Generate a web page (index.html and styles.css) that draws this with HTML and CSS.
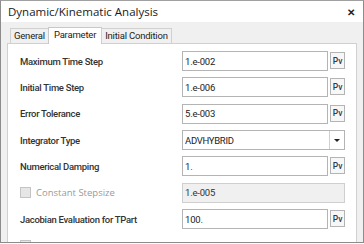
FILE: index.html
```html
<!DOCTYPE html>
<html>
<head>
<meta charset="utf-8" />
<title>Dynamic/Kinematic Analysis</title>
<link rel="stylesheet" href="styles.css">
</head>
<body>
<div class="window">
  <div class="titlebar">
    <span class="title">Dynamic/Kinematic Analysis</span>
    <span class="close">&#x2715;</span>
  </div>
  <div class="client">
    <div class="tabs">
      <div class="tab">General</div>
      <div class="tab active">Parameter</div>
      <div class="tab">Initial Condition</div>
    </div>
    <div class="panel">
      <div class="row">
        <label>Maximum Time Step</label>
        <div class="field"><input type="text" value="1.e-002" /><button class="pv">Pv</button></div>
      </div>
      <div class="row">
        <label>Initial Time Step</label>
        <div class="field"><input type="text" value="1.e-006" /><button class="pv">Pv</button></div>
      </div>
      <div class="row">
        <label>Error Tolerance</label>
        <div class="field"><input type="text" value="5.e-003" /><button class="pv">Pv</button></div>
      </div>
      <div class="row">
        <label>Integrator Type</label>
        <div class="field"><div class="combo"><span>ADVHYBRID</span><span class="arrow"></span></div></div>
      </div>
      <div class="row">
        <label>Numerical Damping</label>
        <div class="field"><input type="text" value="1." /><button class="pv">Pv</button></div>
      </div>
      <div class="row">
        <label class="disabled"><span class="check"></span>Constant Stepsize</label>
        <div class="field"><input type="text" class="off" value="1.e-005" disabled /></div>
      </div>
      <div class="row">
        <label>Jacobian Evaluation for TPart</label>
        <div class="field"><input type="text" value="100." /><button class="pv">Pv</button></div>
      </div>
      <div class="row">
        <label class="disabled"><span class="check"></span></label>
      </div>
    </div>
  </div>
</div>
</body>
</html>
```
FILE: styles.css
```css
html, body {
  margin: 0; padding: 0;
  background: white;
  font-family: "Open Sans", "Liberation Sans", Arial, sans-serif;
  color: #222;
}
.window {
  width: 364px;
  height: 243px;
  box-sizing: border-box;
  border: 1px solid #8c8c8c;
  border-top-color: #a0a0a0;
  overflow: hidden;
  display: flex;
  flex-direction: column;
}
.titlebar {
  height: 21px;
  flex-shrink: 0;
  background: white;
  display: flex;
  align-items: center;
  justify-content: space-between;
  padding: 0 8px 0 7px;
  font-size: 11.5px;
  color: #1a1a1a;
}
.close {
  font-size: 10px;
  font-weight: 700;
  color: #222;
}
.client {
  flex: 1;
  background: #f0f0f0;
  padding: 5px 6px 0 6px;
  display: flex;
  flex-direction: column;
}
.tabs {
  display: flex;
  align-items: flex-end;
  padding-left: 3px;
  height: 16px;
  position: relative;
  z-index: 1;
}
.tab {
  height: 14px;
  padding: 0 3px;
  border: 1px solid #d0d0d0;
  border-bottom: none;
  background: #f0f0f0;
  font-family: Roboto, "Liberation Sans", sans-serif;
  font-size: 9.5px;
  letter-spacing: -0.2px;
  line-height: 14px;
  color: #222;
  margin-right: -1px;
}
.tab.active {
  height: 16px;
  background: white;
  padding: 0 5px;
  line-height: 14px;
  margin-bottom: -1px;
  border-color: #c8c8c8;
}
.panel {
  flex: 1;
  background: white;
  border: 1px solid #d0d0d0;
  border-bottom: none;
  padding: 4px 11px 0 12px;
  display: flex;
  flex-direction: column;
}
.row {
  display: flex;
  align-items: center;
  height: 26.33px;
  flex-shrink: 0;
}
.row label {
  width: 162px;
  flex-shrink: 0;
  font-family: Roboto, "Liberation Sans", sans-serif;
  font-size: 9.5px;
  font-weight: 500;
  letter-spacing: -0.3px;
  color: #333;
  display: flex;
  align-items: center;
}
.row label.disabled {
  font-family: "Open Sans", "Liberation Sans", sans-serif;
  color: #9a9a9a;
  font-weight: 400;
  letter-spacing: 0;
}
.check {
  width: 9px;
  height: 9px;
  border: 1px solid #c4c4c4;
  background: #e6e6e6;
  margin-right: 5px;
}
.field {
  flex: 1;
  display: flex;
  gap: 2px;
  height: 20px;
}
.field input {
  flex: 1;
  min-width: 0;
  box-sizing: border-box;
  height: 20px;
  border: 1px solid #b4b4b4;
  padding: 0 2px;
  font-family: Roboto, "Liberation Sans", sans-serif;
  font-size: 9.5px;
  letter-spacing: -0.2px;
  color: #222;
  background: white;
  outline: none;
}
.field input.off {
  background: #f0f0f0;
  border-color: #cfcfcf;
  color: #333;
}
.pv {
  width: 15px;
  height: 17px;
  margin-top: 1px;
  box-sizing: border-box;
  border: 1px solid #b4b4b4;
  background: #f7f7f7;
  padding: 0;
  font-family: Roboto, "Liberation Sans", sans-serif;
  font-size: 8.5px;
  font-weight: 500;
  color: #2a3a5a;
}
.combo {
  flex: 1;
  box-sizing: border-box;
  height: 20px;
  border: 1px solid #b4b4b4;
  display: flex;
  align-items: center;
  justify-content: space-between;
  padding-left: 2px;
  font-family: Roboto, "Liberation Sans", sans-serif;
  font-size: 9.5px;
  letter-spacing: -0.3px;
  color: #222;
}
.combo .arrow {
  width: 14px;
  height: 18px;
  border-left: 1px solid #d0d0d0;
  display: flex;
  align-items: center;
  justify-content: center;
}
.combo .arrow::after {
  content: '';
  border-left: 3px solid transparent;
  border-right: 3px solid transparent;
  border-top: 3px solid #222;
}
```
